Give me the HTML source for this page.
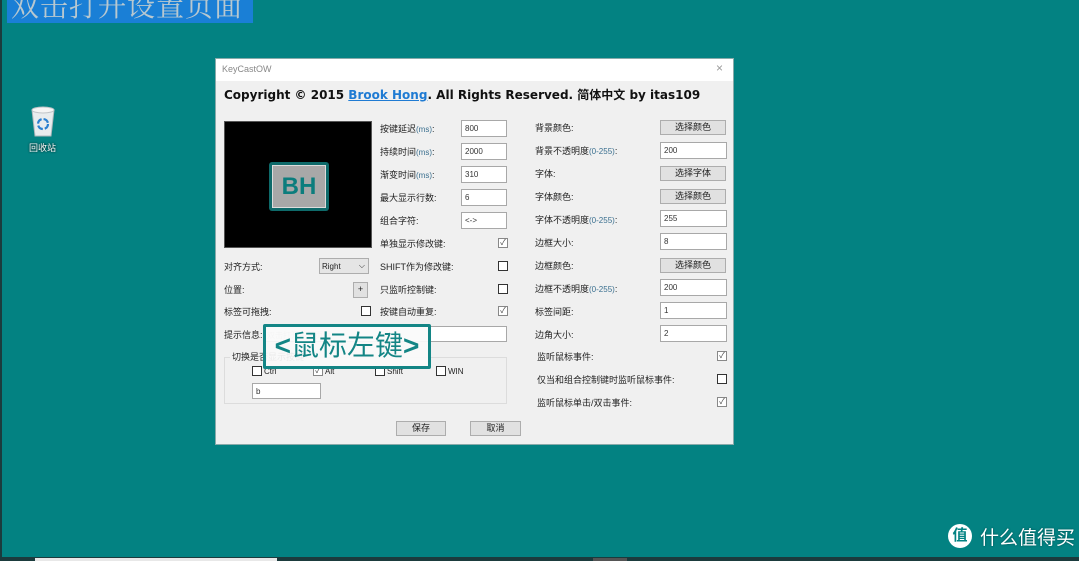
<!DOCTYPE html>
<html><head><meta charset="utf-8"><style>
*{margin:0;padding:0;box-sizing:border-box}
body{width:1079px;height:561px;overflow:hidden;background:#038282;font-family:"Liberation Sans","Noto Sans CJK SC",sans-serif;position:relative}
.a{position:absolute}
.l{position:absolute;font-size:9px;color:#222;line-height:12px;white-space:nowrap}
.l i{font-style:normal;color:#3a6f8f;font-size:8px}
.in{position:absolute;background:#fff;border:1px solid #a8a8a8;height:17px;font-size:8px;color:#333;padding:3px 0 0 3px}
.bt{position:absolute;background:#e1e1e1;border:1px solid #adadad;height:15px;font-size:9px;color:#222;text-align:center;line-height:13px}
.cb{position:absolute;width:10px;height:10px;border:1px solid #333;background:#fff;font-size:8px;line-height:8px;text-align:center;color:#444}
</style></head><body>
<div class="a" style="left:0;top:0;width:2px;height:561px;background:#1b3b3d"></div>
<div class="a" style="left:7px;top:0;width:246px;height:23px;background:#1a7fd6;overflow:hidden"><div style="position:absolute;left:4px;top:-15px;font-size:28px;color:#b8c8d0;font-family:'Noto Serif CJK SC',serif;letter-spacing:1px;white-space:nowrap">双击打开设置页面</div></div>
<svg class="a" style="left:29px;top:106px" width="28" height="32" viewBox="0 0 28 32"><path d="M3 4 L25 4 L22 30 L6 30 Z" fill="#e8ecee" stroke="#b0b8bc"/><ellipse cx="14" cy="4" rx="11" ry="3" fill="#f5f5f5" stroke="#c0c4c8"/><circle cx="14" cy="18" r="5" fill="none" stroke="#2a7fd0" stroke-width="2.2" stroke-dasharray="6 2"/></svg>
<div class="a" style="left:29px;top:141px;font-size:9px;color:#fff;text-shadow:0 0 2px #000">回收站</div>

<div class="a" style="left:215px;top:58px;width:519px;height:387px;background:#f0f0f0;border:1px solid #8aa">
<div class="a" style="left:0;top:0;width:517px;height:22px;background:#fff"></div>
<div class="a" style="left:6px;top:5px;font-size:9px;color:#888">KeyCastOW</div>
<div class="a" style="left:500px;top:2px;font-size:12px;color:#999">×</div>
<div class="a" style="left:8px;top:27px;font-size:12px;font-weight:bold;color:#111;white-space:nowrap;font-family:'DejaVu Sans','Noto Sans CJK SC',sans-serif">Copyright © 2015 <span style="color:#1f7bd3;text-decoration:underline">Brook Hong</span>. All Rights Reserved. 简体中文 by itas109</div>
</div>
<div class="a" style="left:224px;top:121px;width:148px;height:127px;background:#000;border:1px solid #555"></div>
<div class="a" style="left:269px;top:162px;width:60px;height:49px;background:#0e6a6a;border-radius:3px;padding:3px"><div style="width:54px;height:43px;background:#a8a8a8;border:1px solid #ddd;color:#0c7d7d;font-weight:bold;font-size:24px;text-align:center;line-height:41px;font-family:'Liberation Sans',sans-serif">BH</div></div>

<div class="l" style="left:380px;top:123px">按键延迟<i>(ms)</i>:</div><div class="in" style="left:461px;top:120px;width:46px">800</div>
<div class="l" style="left:380px;top:146px">持续时间<i>(ms)</i>:</div><div class="in" style="left:461px;top:143px;width:46px">2000</div>
<div class="l" style="left:380px;top:169px">渐变时间<i>(ms)</i>:</div><div class="in" style="left:461px;top:166px;width:46px">310</div>
<div class="l" style="left:380px;top:192px">最大显示行数:</div><div class="in" style="left:461px;top:189px;width:46px">6</div>
<div class="l" style="left:380px;top:215px">组合字符:</div><div class="in" style="left:461px;top:212px;width:46px">&lt;-&gt;</div>
<div class="l" style="left:380px;top:238px">单独显示修改键:</div><div class="cb" style="left:498px;top:238px;border-color:#888">✓</div>
<div class="l" style="left:380px;top:261px">SHIFT作为修改键:</div><div class="cb" style="left:498px;top:261px"></div>
<div class="l" style="left:380px;top:284px">只监听控制键:</div><div class="cb" style="left:498px;top:284px"></div>
<div class="l" style="left:380px;top:306px">按键自动重复:</div><div class="cb" style="left:498px;top:306px;border-color:#888">✓</div>

<div class="l" style="left:224px;top:261px">对齐方式:</div>
<div class="a" style="left:319px;top:258px;width:50px;height:16px;background:#e5e5e5;border:1px solid #adadad;font-size:8px;padding:3px 0 0 2px;color:#222">Right<span style="position:absolute;right:3px;top:2px">⌵</span></div>
<div class="l" style="left:224px;top:284px">位置:</div>
<div class="bt" style="left:353px;top:282px;width:15px;height:16px">+</div>
<div class="l" style="left:224px;top:306px">标签可拖拽:</div><div class="cb" style="left:361px;top:306px"></div>
<div class="l" style="left:224px;top:329px">提示信息:</div>
<div class="in" style="left:263px;top:326px;width:244px;height:16px;color:#bbb">双击打开设置页面</div>
<div class="a" style="left:224px;top:357px;width:283px;height:47px;border:1px solid #dcdcdc"></div>
<div class="l" style="left:230px;top:351px;background:#f0f0f0;padding:0 2px">切换是否显示按键</div>
<div class="cb" style="left:252px;top:366px"></div><div class="l" style="left:264px;top:366px;font-size:8px">Ctrl</div>
<div class="cb" style="left:313px;top:366px;border-color:#888">✓</div><div class="l" style="left:325px;top:366px;font-size:8px">Alt</div>
<div class="cb" style="left:375px;top:366px"></div><div class="l" style="left:387px;top:366px;font-size:8px">Shift</div>
<div class="cb" style="left:436px;top:366px"></div><div class="l" style="left:448px;top:366px;font-size:8px">WIN</div>
<div class="in" style="left:252px;top:383px;width:69px;height:16px">b</div>
<div class="bt" style="left:396px;top:421px;width:50px">保存</div>
<div class="bt" style="left:470px;top:421px;width:51px">取消</div>

<div class="a" style="left:263px;top:324px;width:168px;height:45px;background:rgba(250,250,250,.93);border:3px solid #138585;border-radius:2px;color:#138585;font-size:28px;line-height:38px;text-align:center;white-space:nowrap;font-family:'Liberation Sans','Noto Sans CJK SC',sans-serif"><b>&lt;</b>鼠标左键<b>&gt;</b></div>

<div class="l" style="left:535px;top:122px">背景颜色:</div><div class="bt" style="left:660px;top:120px;width:66px">选择颜色</div>
<div class="l" style="left:535px;top:145px">背景不透明度<i>(0-255)</i>:</div><div class="in" style="left:660px;top:142px;width:67px">200</div>
<div class="l" style="left:535px;top:168px">字体:</div><div class="bt" style="left:660px;top:166px;width:66px">选择字体</div>
<div class="l" style="left:535px;top:191px">字体颜色:</div><div class="bt" style="left:660px;top:189px;width:66px">选择颜色</div>
<div class="l" style="left:535px;top:214px">字体不透明度<i>(0-255)</i>:</div><div class="in" style="left:660px;top:210px;width:67px">255</div>
<div class="l" style="left:535px;top:237px">边框大小:</div><div class="in" style="left:660px;top:233px;width:67px">8</div>
<div class="l" style="left:535px;top:260px">边框颜色:</div><div class="bt" style="left:660px;top:258px;width:66px">选择颜色</div>
<div class="l" style="left:535px;top:283px">边框不透明度<i>(0-255)</i>:</div><div class="in" style="left:660px;top:279px;width:67px">200</div>
<div class="l" style="left:535px;top:306px">标签间距:</div><div class="in" style="left:660px;top:302px;width:67px">1</div>
<div class="l" style="left:535px;top:329px">边角大小:</div><div class="in" style="left:660px;top:325px;width:67px">2</div>
<div class="l" style="left:537px;top:351px">监听鼠标事件:</div><div class="cb" style="left:717px;top:351px;border-color:#888">✓</div>
<div class="l" style="left:537px;top:374px">仅当和组合控制键时监听鼠标事件:</div><div class="cb" style="left:717px;top:374px"></div>
<div class="l" style="left:537px;top:397px">监听鼠标单击/双击事件:</div><div class="cb" style="left:717px;top:397px;border-color:#888">✓</div>

<div class="a" style="left:948px;top:524px;width:24px;height:24px;border-radius:50%;background:#fff;color:#038282;font-size:15px;font-weight:bold;text-align:center;line-height:24px">值</div>
<div class="a" style="left:980px;top:523px;font-size:19px;color:#fff;white-space:nowrap;text-shadow:0 0 2px rgba(0,0,0,.4)">什么值得买</div>

<div class="a" style="left:0;top:557px;width:1079px;height:4px;background:#1b3b3d"></div>
<div class="a" style="left:35px;top:558px;width:242px;height:3px;background:#e8e8e8"></div>
<div class="a" style="left:593px;top:558px;width:34px;height:3px;background:#555"></div>
</body></html>
